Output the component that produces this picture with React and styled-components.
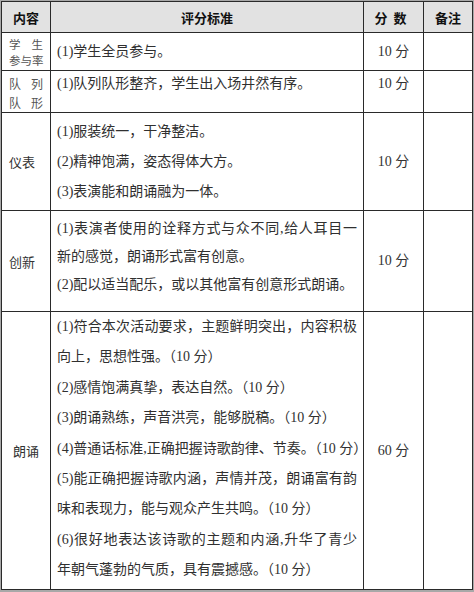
import React from "react";
import styled, { createGlobalStyle } from "styled-components";

const GlobalStyle = createGlobalStyle`
  html, body {
    margin: 0;
    padding: 0;
    background: #a8a8a8;
  }
`;

const Page = styled.div`
  width: 474px;
  height: 592px;
  box-sizing: border-box;
  padding: 1px 2px 1px 1px;
  background: #a8a8a8;
  font-family: "Liberation Serif", "Noto Sans CJK SC", serif;
  color: #303030;
`;

const Sheet = styled.table`
  width: 471px;
  table-layout: fixed;
  border-collapse: collapse;
  background: #fff;
  border: 1px solid #2a2a2a;
`;

const Col = styled.col`
  width: ${p => p.$w}px;
`;

const Row = styled.tr`
  height: ${p => p.$h}px;
`;

const HeadCell = styled.th`
  background: #e2e2e2;
  border: 1px solid #2a2a2a;
  padding: 0;
  font-family: "Noto Sans CJK SC", sans-serif;
  font-size: 13px;
  font-weight: 700;
  color: #111;
  text-align: center;
  letter-spacing: ${p => p.$spread || 0}px;
`;

const Cell = styled.td`
  border: 1px solid #2a2a2a;
  padding: ${p => p.$pad || "0 6px"};
  vertical-align: ${p => p.$top ? "top" : "middle"};
  text-align: ${p => p.$center ? "center" : "left"};
  font-size: 14px;
`;

const BigLabel = styled.div`
  font-family: "Noto Sans CJK SC", sans-serif;
  font-size: 13px;
  padding-left: ${p => p.$centered ? 0 : 1}px;
  text-align: ${p => p.$centered ? "center" : "left"};
  color: #333;
`;

const SmallLabel = styled.div`
  display: flex;
  justify-content: space-between;
  padding: 0 1px;
  font-family: "Noto Sans CJK SC", sans-serif;
  font-size: ${p => p.$size}px;
  line-height: ${p => p.$lh}px;
  color: #555;
`;

const Lines = styled.div`
  padding-top: ${p => p.$offset || 0}px;
`;

const Line = styled.div`
  line-height: ${p => p.$lh || 30}px;
  white-space: nowrap;
  text-align: ${p => p.$full ? "justify" : "left"};
  text-align-last: ${p => p.$full ? "justify" : "auto"};
`;

const Score = styled.div`
  font-size: 14px;
  line-height: ${p => p.$lh || 20}px;
  text-align: center;
  color: #333;
`;

const rows = [
  {
    h: 38,
    small: { words: [["学", "生"], ["参", "与", "率"]], size: 11.5, lh: 16 },
    lines: [{ t: "(1)学生全员参与。" }],
    score: "10 分",
    lh: 30,
  },
  {
    h: 42,
    top: true,
    labelOffset: 3,
    small: { words: [["队", "列"], ["队", "形"]], size: 12, lh: 19 },
    lines: [{ t: "(1)队列队形整齐，学生出入场井然有序。" }],
    score: "10 分",
    lh: 26,
  },
  {
    h: 98,
    label: "仪表",
    lines: [
      { t: "(1)服装统一，干净整洁。" },
      { t: "(2)精神饱满，姿态得体大方。" },
      { t: "(3)表演能和朗诵融为一体。" },
    ],
    score: "10 分",
    lh: 30,
  },
  {
    h: 101,
    label: "创新",
    textTop: true,
    offset: 4,
    lines: [
      { t: "(1)表演者使用的诠释方式与众不同,给人耳目一", full: true },
      { t: "新的感觉，朗诵形式富有创意。" },
      { t: "(2)配以适当配乐，或以其他富有创意形式朗诵。" },
    ],
    score: "10 分",
    lh: 28,
  },
  {
    h: 278,
    label: "朗诵",
    centered: true,
    textTop: true,
    offset: 0,
    lines: [
      { t: "(1)符合本次活动要求，主题鲜明突出，内容积极", full: true },
      { t: "向上，思想性强。（10 分）" },
      { t: "(2)感情饱满真挚，表达自然。（10 分）" },
      { t: "(3)朗诵熟练，声音洪亮，能够脱稿。（10 分）" },
      { t: "(4)普通话标准,正确把握诗歌韵律、节奏。（10 分）", full: true },
      { t: "(5)能正确把握诗歌内涵，声情并茂，朗诵富有韵", full: true },
      { t: "味和表现力，能与观众产生共鸣。（10 分）" },
      { t: "(6)很好地表达该诗歌的主题和内涵,升华了青少", full: true },
      { t: "年朝气蓬勃的气质，具有震撼感。（10 分）" },
    ],
    score: "60 分",
    lh: 30.4,
  },
];

export default function App() {
  return (
    <Page lang="zh-CN">
      <GlobalStyle />
      <Sheet>
        <colgroup>
          <Col $w={49} />
          <Col $w={313} />
          <Col $w={60} />
          <Col $w={49} />
        </colgroup>
        <thead>
          <Row $h={31}>
            <HeadCell>内容</HeadCell>
            <HeadCell>评分标准</HeadCell>
            <HeadCell $spread={6}>分数</HeadCell>
            <HeadCell>备注</HeadCell>
          </Row>
        </thead>
        <tbody>
          {rows.map((r, i) => (
            <Row key={i} $h={r.h}>
              <Cell $top={r.top} $pad={`${r.labelOffset || 0}px 6px 0`}>
                {r.small
                  ? r.small.words.map((w, j) => (
                      <SmallLabel key={j} $size={r.small.size} $lh={r.small.lh}>
                        {w.map((c, k) => (
                          <span key={k}>{c}</span>
                        ))}
                      </SmallLabel>
                    ))
                  : <BigLabel $centered={r.centered}>{r.label}</BigLabel>}
              </Cell>
              <Cell $top={r.top || r.textTop}>
                <Lines $offset={r.offset}>
                  {r.lines.map((l, j) => (
                    <Line key={j} $full={l.full} $lh={r.lh}>
                      {l.t}
                    </Line>
                  ))}
                </Lines>
              </Cell>
              <Cell $top={r.top} $center $pad="0">
                <Score $lh={r.top ? r.lh : 20}>{r.score}</Score>
              </Cell>
              <Cell />
            </Row>
          ))}
        </tbody>
      </Sheet>
    </Page>
  );
}
